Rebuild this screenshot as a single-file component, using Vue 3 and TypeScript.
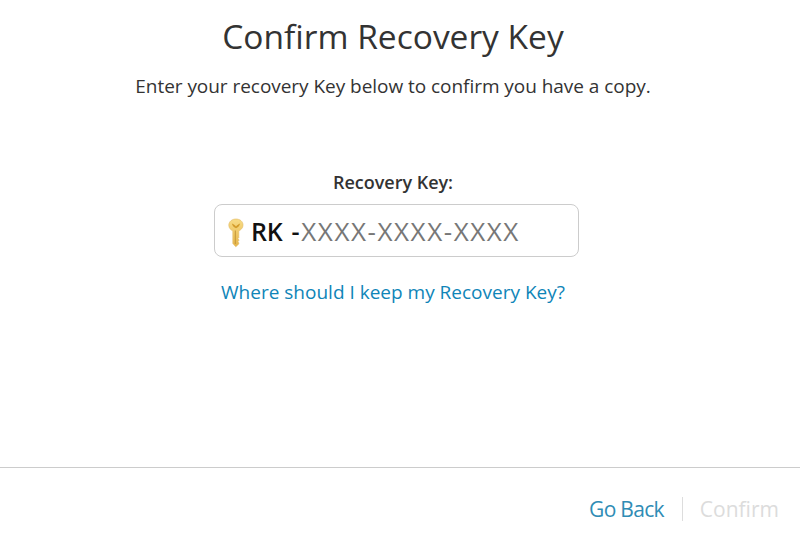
<script setup lang="ts">
const title: string = 'Confirm Recovery Key'
</script>

<template>
  <div class="page">
    <main class="main">
      <h1 class="title">{{ title }}</h1>
      <p class="sub">Enter your recovery Key below to confirm you have a copy.</p>
      <label class="label">Recovery Key:</label>
      <div class="field">
        <svg class="key" width="16" height="30" viewBox="0 0 16 30">
          <defs>
            <linearGradient id="kg" x1="0" y1="0" x2="0" y2="1">
              <stop offset="0" stop-color="#f8dc86" />
              <stop offset="1" stop-color="#e6b54a" />
            </linearGradient>
          </defs>
          <path d="M8 1C4 1 .800 3.600.800 7.200c0 2.900 2 4.900 4 5.600V25.500l3 3.300 3-2.800v-1.300l-1-.9 1-1v-1.200l-1-.9 1-1V12.800c2-.700 4.200-2.700 4.200-5.600C15.200 3.600 12 1 8 1z" fill="url(#kg)" stroke="#e0b964" stroke-width=".6" />
          <path d="M3.800 5.600C5.500 6.400 6.800 6.800 8 8.600 9.200 6.800 10.500 6.400 12.200 5.600 11 8.700 10 9.500 8 10.200 6 9.500 5 8.700 3.800 5.600z" fill="#d39c2b" />
          <path d="M7.300 12.500v13.500" stroke="#c4953a" stroke-width="1" fill="none" />
        </svg>
        <span class="prefix">RK -</span><span class="placeholder">XXXX-XXXX-XXXX</span>
      </div>
      <a class="help">Where should I keep my Recovery Key?</a>
    </main>
    <footer class="footer">
      <a class="back">Go Back</a>
      <span class="divider"></span>
      <a class="confirm">Confirm</a>
    </footer>
  </div>
</template>

<style>
html, body { margin: 0; background: #fff; }
</style>

<style scoped>
.page {
  width: 800px;
  height: 534px;
  display: flex;
  flex-direction: column;
  font-family: "Open Sans", "Liberation Sans", sans-serif;
  color: #333;
  overflow: hidden;
}
.main {
  height: 467px;
  box-sizing: border-box;
  padding-right: 14px;
  display: flex;
  flex-direction: column;
  align-items: center;
  flex: none;
}
.title {
  margin: 13px 0 0;
  font-size: 33.500px;
  line-height: 46px;
  font-weight: 400;
  color: #333;
}
.sub {
  margin: 14px 0 0;
  font-size: 19px;
  line-height: 26px;
  letter-spacing: -0.04px;
  color: #333;
}
.label {
  margin-top: 71px;
  font-size: 18px;
  line-height: 24px;
  font-weight: 600;
  letter-spacing: -0.02px;
  color: #333;
}
.field {
  margin-top: 10px;
  margin-left: 7px;
  box-sizing: border-box;
  width: 365px;
  height: 53px;
  border: 1px solid #ccc;
  border-radius: 8px;
  display: flex;
  align-items: center;
  padding-left: 13px;
}
.key { flex: none; margin: 4px 7px 0 0; }
.prefix {
  font-size: 25px;
  font-weight: 600;
  letter-spacing: -0.3px;
  word-spacing: 3px;
  color: #111;
}
.placeholder {
  font-size: 26px;
  letter-spacing: 1.550px;
  color: #777;
  margin-left: 2px;
}
.help {
  margin-top: 22px;
  font-size: 19px;
  line-height: 26px;
  color: #0f85b8;
}
.footer {
  flex: 1;
  border-top: 1px solid #ccc;
  display: flex;
  align-items: center;
  justify-content: flex-end;
  padding: 15px 21px 0 0;
}
.back, .confirm {
  font-size: 21px;
}
.back { color: #2f8cb5; letter-spacing: -0.7px; }
.confirm { color: #dcdcdc; letter-spacing: 0; }
.divider {
  width: 1px;
  height: 24px;
  background: #ddd;
  margin: 0 17px 0 18px;
}
</style>
